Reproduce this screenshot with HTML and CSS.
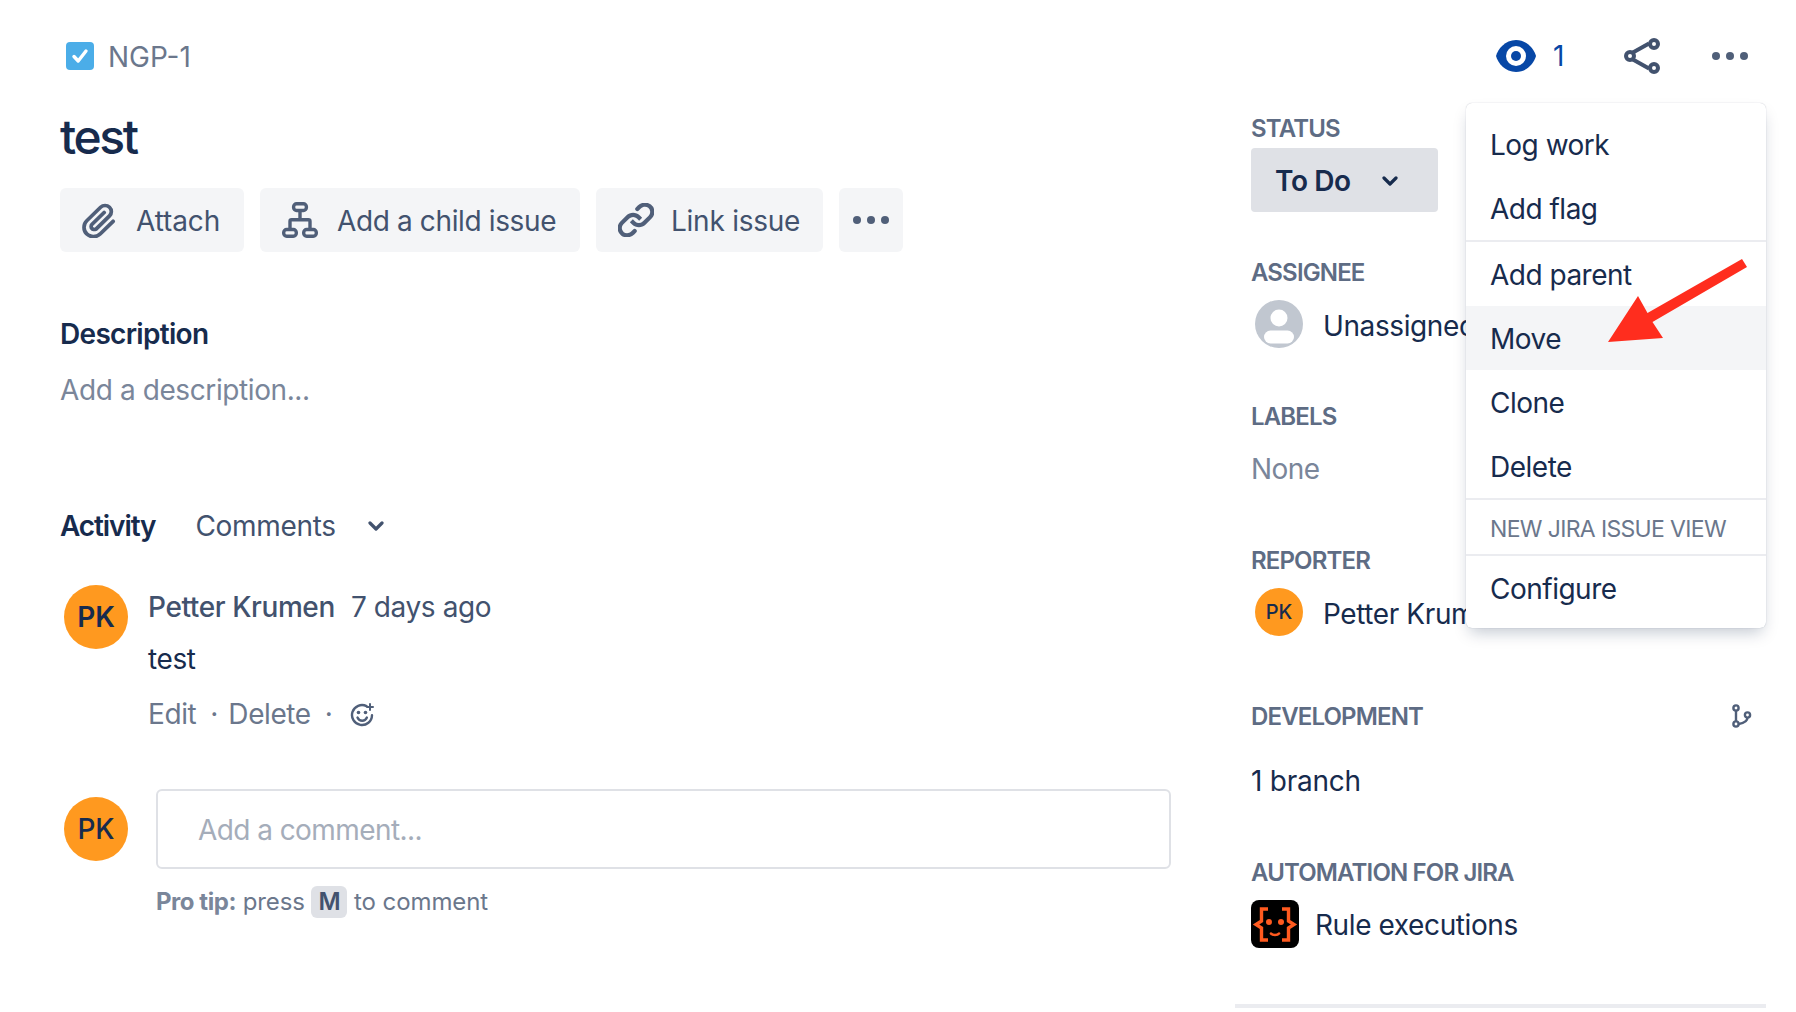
FILE: index.html
```html
<!DOCTYPE html>
<html lang="en">
<head>
<meta charset="utf-8">
<title>NGP-1 test</title>
<link rel="stylesheet" href="styles.css">
</head>
<body>
<div class="page">
  <main class="main">
    <div class="crumbs">
      <svg class="type-icon" viewBox="0 0 28 28"><rect width="28" height="28" rx="4" fill="#4bade8"/><path d="M8 14.500l4.200 4.500L20 9" fill="none" stroke="#fff" stroke-width="3.400" stroke-linecap="round" stroke-linejoin="round"/></svg>
      <span class="issue-key">NGP-1</span>
    </div>
    <h1 class="title">test</h1>
    <div class="toolbar">
      <div class="btn btn-attach">
        <svg class="icon-clip" viewBox="3 2.200 17.500 18.600"><path fill="#505f79" d="M11.643 17.965c-1.53 1.495-4.016 1.496-5.542.004a3.773 3.773 0 01.002-5.412l7.147-6.985a2.316 2.316 0 013.233-.003c.893.873.895 2.282.004 3.153l-6.703 6.55a.653.653 0 01-.914-.008.62.62 0 010-.902l6.229-6.087a.941.941 0 000-1.353.995.995 0 00-1.384 0l-6.23 6.087a2.502 2.502 0 000 3.607c1.017.994 2.65 1 3.675.008l.005-.006 6.703-6.55a4.024 4.024 0 00-.004-5.756 4.26 4.26 0 00-5.955.004l-7.146 6.985a5.655 5.655 0 00-.002 8.115c2.28 2.228 5.99 2.227 8.266-.006l6.705-6.552a.94.94 0 000-1.352.995.995 0 00-1.383 0l-6.706 6.55z"/></svg>
        <span class="btn-text">Attach</span>
      </div>
      <div class="btn btn-child">
        <svg class="btn-icon" viewBox="0 0 36 36"><g fill="none" stroke="#505f79" stroke-width="3.400"><rect x="11.600" y="1.700" width="12.800" height="6.800" rx="3"/><rect x="1.700" y="27.500" width="12.600" height="6.800" rx="3"/><rect x="21.700" y="27.500" width="12.600" height="6.800" rx="3"/><path d="M18 9v9M8 27v-7.600a1.600 1.600 0 011.600-1.600h16.800a1.600 1.600 0 011.600 1.600V27"/></g></svg>
        <span class="btn-text">Add a child issue</span>
      </div>
      <div class="btn btn-link">
        <svg class="icon-link" viewBox="3.500 4.200 17 16.600"><g fill="#505f79"><path d="M12.856 5.457l-.937.92a1.002 1.002 0 000 1.437 1.047 1.047 0 001.463 0l.984-.966c.967-.95 2.542-1.135 3.602-.288a2.54 2.54 0 01.203 3.81l-2.903 2.852a2.646 2.646 0 01-3.696 0l-1.11-1.09L9 13.57l1.108 1.089c1.822 1.788 4.802 1.788 6.622 0l2.905-2.852a4.558 4.558 0 00-.357-6.82c-1.893-1.517-4.695-1.226-6.422.47"/><path d="M11.144 19.543l.937-.92a1.002 1.002 0 000-1.437 1.047 1.047 0 00-1.462 0l-.985.966c-.967.95-2.542 1.135-3.602.288a2.54 2.54 0 01-.203-3.81l2.903-2.852a2.646 2.646 0 013.696 0l1.11 1.09L15 11.43l-1.108-1.089c-1.822-1.788-4.802-1.788-6.622 0l-2.905 2.852a4.558 4.558 0 00.357 6.82c1.893 1.517 4.695 1.226 6.422-.47"/></g></svg>
        <span class="btn-text">Link issue</span>
      </div>
      <div class="btn btn-more">
        <svg class="dots" viewBox="0 0 36 8"><g fill="#505f79"><circle cx="4" cy="4" r="4"/><circle cx="18" cy="4" r="4"/><circle cx="32" cy="4" r="4"/></g></svg>
      </div>
    </div>
    <h2 class="section-title desc-title">Description</h2>
    <p class="description">Add a description...</p>
    <div class="activity">
      <span class="section-title activity-title">Activity</span>
      <span class="activity-filter">Comments</span>
      <svg class="activity-chevron" viewBox="0 0 16 10"><path d="M2 2l6 6 6-6" fill="none" stroke="#42526e" stroke-width="3.200" stroke-linecap="round" stroke-linejoin="round"/></svg>
    </div>
    <div class="comment">
      <div class="avatar avatar-large avatar-strong">PK</div>
      <div class="comment-body">
        <div class="comment-head"><span class="comment-author">Petter Krumen</span><span class="comment-time">7 days ago</span></div>
        <div class="comment-text">test</div>
        <div class="comment-actions">
          <span>Edit</span><span class="sep">·</span><span>Delete</span><span class="sep">·</span>
          <svg class="react" viewBox="0 0 24 24"><g fill="none" stroke="#505f79" stroke-width="2.400" stroke-linecap="round"><path d="M16.500 3.100A10 10 0 1022 12.200"/><path d="M7.500 14.500c1 2.200 2.700 3.300 4.700 3.300s3.700-1.100 4.700-3.300"/><path d="M20 1v6M17 4h6" stroke-width="2"/></g><circle cx="8.500" cy="9.500" r="1.800" fill="#505f79"/><circle cx="15.500" cy="9.500" r="1.800" fill="#505f79"/></svg>
        </div>
      </div>
    </div>
    <div class="add-comment">
      <div class="avatar avatar-large avatar-offset">PK</div>
      <div class="comment-input"><span class="input-placeholder">Add a comment...</span></div>
    </div>
    <p class="tip"><strong class="tip-strong">Pro tip:</strong> press <kbd class="key">M</kbd> to comment</p>
  </main>

  <aside class="side">
    <div class="actions">
      <div class="watch">
        <svg class="eye" viewBox="0 0 40 32"><path fill="#0747a6" d="M20 0C9 0 2 9 0 16c2 7 9 16 20 16s18-9 20-16C38 9 31 0 20 0z"/><circle cx="20" cy="16" r="10" fill="#fff"/><circle cx="20" cy="16" r="5" fill="#0747a6"/></svg>
        <span class="watch-count">1</span>
      </div>
      <svg class="share" viewBox="0 0 36 36"><g fill="none" stroke="#42526e" stroke-width="4"><path d="M8 15L25 5.500M8 21L25 30.500"/><circle cx="6" cy="18" r="4"/><circle cx="30" cy="6" r="4"/><circle cx="30" cy="30" r="4"/></g></svg>
      <svg class="dots" viewBox="0 0 36 8"><g fill="#505f79"><circle cx="4" cy="4" r="4"/><circle cx="18" cy="4" r="4"/><circle cx="32" cy="4" r="4"/></g></svg>
    </div>

    <h3 class="field-label label-status">STATUS</h3>
    <div class="status-btn">
      <span class="btn-text">To Do</span>
      <svg class="status-chevron" viewBox="0 0 16 10"><path d="M2 2l6 6 6-6" fill="none" stroke="#172b4d" stroke-width="3.200" stroke-linecap="round" stroke-linejoin="round"/></svg>
    </div>

    <h3 class="field-label label-assignee">ASSIGNEE</h3>
    <div class="person">
      <svg class="avatar-svg" viewBox="0 0 48 48"><circle cx="24" cy="24" r="24" fill="#c1c7d0"/><circle cx="24" cy="18" r="8.500" fill="#fff"/><rect x="9" y="30.500" width="30" height="13" rx="6.500" fill="#fff"/></svg>
      <span class="person-name">Unassigned</span>
    </div>

    <h3 class="field-label label-labels">LABELS</h3>
    <div class="field-none">None</div>

    <h3 class="field-label label-reporter">REPORTER</h3>
    <div class="person">
      <div class="avatar avatar-small">PK</div>
      <span class="person-name">Petter Krumen</span>
    </div>

    <div class="dev-head">
      <h3 class="field-label">DEVELOPMENT</h3>
      <svg class="branch" viewBox="0 0 20 24"><g fill="none" stroke="#505f79" stroke-width="2.400"><circle cx="4" cy="4" r="2.600"/><circle cx="4" cy="20" r="2.600"/><circle cx="15.500" cy="11" r="2.600"/><path d="M4 6.600v10.800M15.500 13.600c0 3-2.500 5.500-8.800 6.400"/></g></svg>
    </div>
    <div class="dev-value">1 branch</div>

    <h3 class="field-label label-auto">AUTOMATION FOR JIRA</h3>
    <div class="rule-row">
      <svg class="rule-icon" viewBox="0 0 48 48"><rect width="48" height="48" rx="8" fill="#000"/><g fill="none" stroke="#ff5a1f" stroke-width="3.400"><path d="M17 9h-6.500v12L5 24.500l5.500 3.500v12H17M31 9h6.500v12l5.500 3.500-5.500 3.500v12H31"/><path d="M20 33.500c1.500 2 6.500 2 8 0" stroke-width="2.600" stroke-linecap="round"/></g><circle cx="18" cy="22" r="3" fill="#ff5a1f"/><circle cx="30" cy="22" r="3" fill="#ff5a1f"/></svg>
      <span class="btn-text">Rule executions</span>
    </div>
    <div class="side-rule"></div>

    <div class="menu">
      <div class="menu-group menu-first">
        <div class="menu-item">Log work</div>
        <div class="menu-item">Add flag</div>
      </div>
      <div class="menu-group">
        <div class="menu-item">Add parent</div>
        <div class="menu-item menu-item-active">Move</div>
        <div class="menu-item">Clone</div>
        <div class="menu-item">Delete</div>
      </div>
      <div class="menu-group menu-heading">NEW JIRA ISSUE VIEW</div>
      <div class="menu-group menu-last">
        <div class="menu-item">Configure</div>
      </div>
    </div>
    <svg class="arrow" viewBox="0 0 150 90"><polygon fill="#ff2d1e" points="143,0 148,8 53.500,63 64,79 9,83 39,37 48.500,54"/></svg>
  </aside>
</div>
</body>
</html>
```
FILE: styles.css
```css
* { box-sizing: border-box; }
html, body { margin: 0; padding: 0; background: #fff; }
body {
  font-family: Inter, "Liberation Sans", sans-serif;
  font-size: 28px;
  line-height: 40px;
  letter-spacing: -0.4px;
  color: #172b4d;
  overflow: hidden;
  height: 1012px;
}
h1, h2, h3, p { margin: 0; font: inherit; }
.page {
  display: grid;
  grid-template-columns: 1111px 515px;
  column-gap: 80px;
  padding-left: 60px;
}
.main, .side { padding-top: 36px; }
.side { position: relative; }

.crumbs { display: flex; align-items: center; gap: 14px; height: 40px; padding-left: 6px; }
.type-icon { width: 28px; height: 28px; }
.issue-key { color: #6b778c; letter-spacing: 0; padding-top: 2px; }
.title { margin-top: 33px; font-size: 48px; line-height: 56px; font-weight: 500; letter-spacing: -2.4px; }

.toolbar { display: flex; gap: 16px; margin-top: 23px; }
.btn {
  display: flex; align-items: center; height: 64px; border-radius: 6px;
  background: #f4f5f7; color: #42526e; letter-spacing: -0.37px;
}
.btn-text { padding-top: 2px; }
.btn-attach { width: 184px; padding-left: 22px; gap: 20px; letter-spacing: -0.1px; }
.btn-child { width: 320px; padding-left: 22px; gap: 19px; }
.btn-link { width: 227px; padding-left: 22px; gap: 17px; letter-spacing: -0.25px; }
.btn-more { width: 64px; justify-content: center; }
.btn-icon { width: 36px; height: 36px; flex: none; }
.icon-clip { width: 34px; height: 36px; flex: none; }
.icon-link { width: 36px; height: 34px; flex: none; }
.dots { width: 36px; height: 8px; display: block; }

.section-title { font-weight: 600; }
.desc-title { margin-top: 62px; letter-spacing: -0.7px; }
.description { margin-top: 16px; color: #7a869a; }

.activity { display: flex; align-items: center; margin-top: 96px; height: 40px; }
.activity-title { letter-spacing: -1.1px; }
.activity-filter { margin-left: 40px; color: #42526e; letter-spacing: -0.3px; }
.activity-chevron { width: 16px; height: 10px; margin-left: 32px; }

.comment { display: flex; gap: 20px; margin-top: 39px; padding-left: 4px; }
.avatar {
  display: flex; align-items: center; justify-content: center; flex: none;
  border-radius: 50%; background: #ff991f; font-weight: 500; color: #172b4d; letter-spacing: 0;
}
.avatar-large { width: 64px; height: 64px; }
.avatar-strong { font-weight: 600; }
.avatar-small { width: 48px; height: 48px; font-size: 20px; }
.avatar-offset { margin-top: 8px; }
.comment-body { padding-top: 2px; }
.comment-head { display: flex; gap: 16px; color: #42526e; }
.comment-author { font-weight: 500; }
.comment-text { margin-top: 12px; }
.comment-actions { display: flex; align-items: center; gap: 14px; margin-top: 15px; color: #6b778c; }
.sep { width: 4px; text-align: center; }
.react { width: 24px; height: 24px; margin-left: 7px; margin-top: 2px; }

.add-comment { display: flex; gap: 28px; margin-top: 55px; padding-left: 4px; }
.comment-input {
  flex: 1; height: 80px; border: 2px solid #dfe1e6; border-radius: 6px;
  padding-left: 40px; display: flex; align-items: center; color: #a5adba; letter-spacing: -0.57px;
}
.input-placeholder { padding-top: 2px; }
.tip { margin-top: 17px; padding-left: 96px; font-size: 24px; line-height: 32px; color: #6b778c; letter-spacing: -0.1px; }
.tip-strong { font-weight: 700; color: #7a869a; letter-spacing: -0.45px; }
.key {
  display: inline-block; width: 36px; height: 32px; border-radius: 6px;
  background: #dfe1e6; font: 600 24px/32px Inter, "Liberation Sans", sans-serif; text-align: center; color: #42526e;
}

.actions { display: flex; align-items: center; justify-content: flex-end; height: 40px; padding-right: 18px; }
.watch { display: flex; align-items: center; gap: 17px; margin-right: 60px; }
.eye { width: 40px; height: 32px; }
.watch-count { color: #0747a6; }
.share { width: 36px; height: 36px; margin-right: 52px; }

.field-label { font-size: 24px; line-height: 30px; padding-top: 2px; font-weight: 600; color: #5e6c84; letter-spacing: -0.85px; }
.label-status { margin-top: 36px; }
.status-btn {
  display: flex; align-items: center; width: 187px; height: 64px; margin-top: 4px; padding-left: 24px;
  border-radius: 4px; background: #dfe1e6; font-weight: 600; letter-spacing: -0.4px;
}
.status-chevron { width: 16px; height: 10px; margin-left: 31px; margin-top: 2px; }
.label-assignee { margin-top: 44px; }
.person { display: flex; align-items: center; gap: 20px; height: 48px; margin-top: 12px; padding-left: 4px; white-space: nowrap; }
.person-name { padding-top: 4px; }
.avatar-svg { width: 48px; height: 48px; flex: none; }
.label-labels { margin-top: 52px; }
.field-none { margin-top: 17px; color: #7a869a; letter-spacing: -0.6px; }
.label-reporter { margin-top: 55px; }
.dev-head { display: flex; align-items: center; justify-content: space-between; margin-top: 64px; padding-right: 14px; }
.branch { width: 20px; height: 24px; }
.dev-value { margin-top: 29px; letter-spacing: -0.25px; }
.label-auto { margin-top: 55px; }
.rule-row { display: flex; align-items: center; gap: 16px; height: 48px; margin-top: 12px; }
.rule-icon { width: 48px; height: 48px; flex: none; }
.side-rule { height: 4px; margin: 56px 0 0 -16px; background: #ebecf0; }

.menu {
  position: absolute; top: 103px; left: 215px; width: 300px; height: 525px;
  border-radius: 6px; background: #fff; letter-spacing: -0.5px;
  box-shadow: 0 8px 16px -4px rgba(9,30,66,.25), 0 0 1px rgba(9,30,66,.31);
}
.menu-group { border-top: 2px solid #ebecf0; }
.menu-first { border-top: 0; padding-top: 9px; }
.menu-item { height: 64px; padding: 2px 0 0 24px; display: flex; align-items: center; }
.menu-item-active { background: #f4f5f7; }
.menu-heading { height: 56px; display: flex; align-items: center; padding: 3px 0 0 24px; font-size: 23px; letter-spacing: -0.65px; color: #6b778c; }
.arrow { position: absolute; left: 348px; top: 259px; width: 150px; height: 90px; }
```
